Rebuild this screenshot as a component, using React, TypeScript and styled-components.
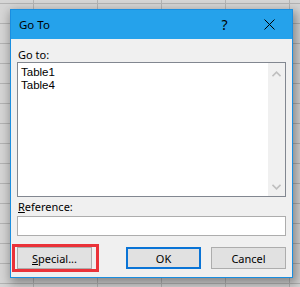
import React from "react"
import styled, { createGlobalStyle } from "styled-components"

const GlobalStyle = createGlobalStyle`
  html, body {
    margin: 0;
    padding: 0;
  }
  body {
    font-family: "Noto Sans", "Liberation Sans", sans-serif;
  }
`

const Sheet = styled.div`
  width: 300px;
  height: 287px;
  overflow: hidden;
  padding: 9px 0 0 10px;
  box-sizing: border-box;
  background-color: #d6d6d6;
  background-image: linear-gradient(to right, #b4b4b4 1px, transparent 1px),
    linear-gradient(to bottom, #b4b4b4 1px, transparent 1px);
  background-size: 64px 100%, 100% 20px;
  background-position: 33px 0, 0 3px;
`

const Dialog = styled.div`
  width: 283px;
  box-sizing: border-box;
  border: 1px solid #1a8ee0;
  background: #f0f0f0;
  box-shadow: 2px 4px 10px 2px rgba(0, 0, 0, 0.36);
  font-size: 11px;
  color: #000;
`

const TitleBar = styled.div`
  display: flex;
  align-items: center;
  height: 29px;
  background: #25a2eb;
  padding-left: 8px;
`

const Title = styled.div`
  flex: 1;
  font-size: 11.5px;
  color: #000;
`

const TitleButton = styled.div`
  width: 45px;
  height: 29px;
  display: flex;
  align-items: center;
  justify-content: center;
  font-size: 14px;
  color: #000;
`

const Body = styled.div`
  display: flex;
  flex-direction: column;
  padding: 8px 6px 8px 6px;
`

const Label = styled.div<{ $h: number; $gap?: number }>`
  height: ${(p) => p.$h}px;
  line-height: ${(p) => p.$h}px;
  margin-top: ${(p) => p.$gap ?? 0}px;
  padding-left: 1px;
`

const ListBox = styled.div`
  display: flex;
  height: 135px;
  box-sizing: border-box;
  border: 1px solid #828790;
  background: #fff;
`

const ListItems = styled.div`
  flex: 1;
  padding: 3px 0 0 3px;
  font-family: "Liberation Sans", "Noto Sans", sans-serif;
  font-size: 11.5px;
  line-height: 13px;
`

const ScrollBar = styled.div`
  width: 17px;
  background: #f0f0f0;
  display: flex;
  flex-direction: column;
  justify-content: space-between;
  align-items: center;
  padding: 8px 0 6px;
`

const TextInput = styled.div`
  height: 20px;
  box-sizing: border-box;
  border: 1px solid #adadad;
  background: #fff;
  margin-top: 2px;
`

const ButtonRow = styled.div`
  display: flex;
  justify-content: space-between;
  margin-top: 11px;
`

const ButtonGroup = styled.div`
  display: flex;
  gap: 10px;
`

const Button = styled.div<{ $default?: boolean }>`
  position: relative;
  width: 75px;
  height: 22px;
  box-sizing: border-box;
  display: flex;
  align-items: center;
  justify-content: center;
  background: #e1e1e1;
  border: ${(p) => (p.$default ? "2px solid #0a74d6" : "1px solid #adadad")};
`

const Highlight = styled.div`
  position: absolute;
  left: -6px;
  right: -8px;
  top: -4px;
  bottom: -4px;
  border: 3px solid #ea3239;
`

const Chevron: React.FC<{ down?: boolean }> = ({ down }) => (
  <svg width="9" height="6" viewBox="0 0 9 6">
    <path
      d={down ? "M0.5 0.8 L4.5 4.8 L8.5 0.8" : "M0.5 5.2 L4.5 1.2 L8.5 5.2"}
      fill="none"
      stroke="#bfbfbf"
      strokeWidth="1.6"
    />
  </svg>
)

const App: React.FC = () => {
  return (
    <Sheet>
      <GlobalStyle />
      <Dialog>
        <TitleBar>
          <Title>Go To</Title>
          <TitleButton>?</TitleButton>
          <TitleButton>
            <svg width="11" height="11" viewBox="0 0 11 11">
              <path d="M0.5 0.5 L10.5 10.5 M10.5 0.5 L0.5 10.5" stroke="#000" strokeWidth="1" />
            </svg>
          </TitleButton>
        </TitleBar>
        <Body>
          <Label $h={15}>Go to:</Label>
          <ListBox>
            <ListItems>
              <div>Table1</div>
              <div>Table4</div>
            </ListItems>
            <ScrollBar>
              <Chevron />
              <Chevron down />
            </ScrollBar>
          </ListBox>
          <Label $h={14} $gap={3}>
            <u>R</u>eference:
          </Label>
          <TextInput />
          <ButtonRow>
            <Button>
              <span>
                <u>S</u>pecial...
              </span>
              <Highlight />
            </Button>
            <ButtonGroup>
              <Button $default>OK</Button>
              <Button>Cancel</Button>
            </ButtonGroup>
          </ButtonRow>
        </Body>
      </Dialog>
    </Sheet>
  )
}

export default App
